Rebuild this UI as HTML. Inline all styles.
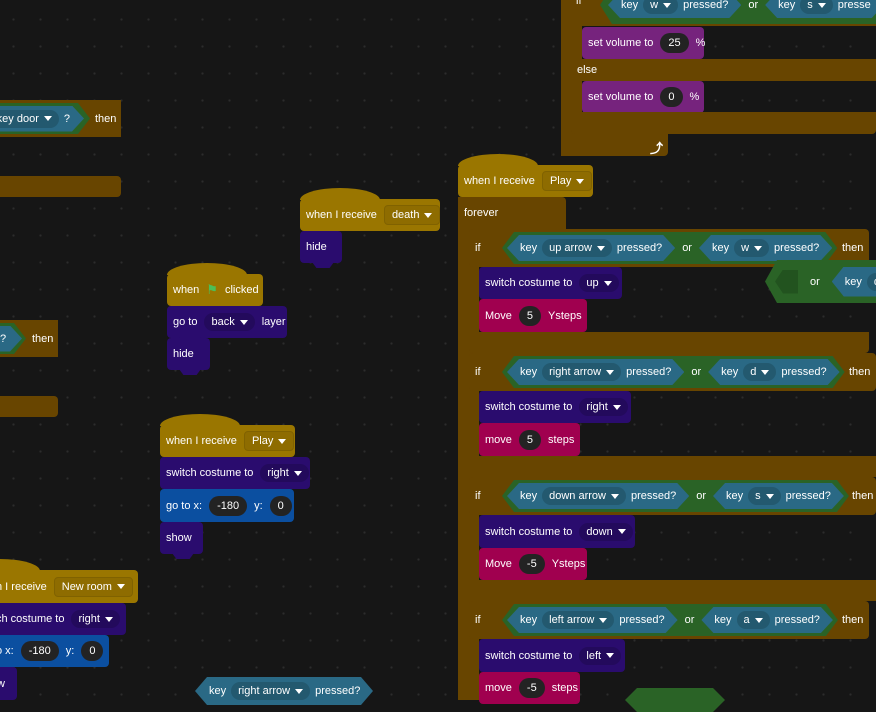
<!DOCTYPE html>
<html><head><meta charset="utf-8">
<style>
body{margin:0;width:876px;height:700px;overflow:hidden;background:#161616;
background-image:radial-gradient(circle,#2c2c2c 1px,transparent 1.3px);background-size:27px 27px;background-position:0px 6px;
font-family:"Liberation Sans",sans-serif;font-size:11px;color:#fff;position:relative}
.b{position:absolute;box-sizing:border-box;display:flex;align-items:center;gap:7px;padding:0 6px;border-radius:4px;white-space:nowrap}
.r{position:absolute;box-sizing:border-box}
.c{background:#684500}
.e{background:#9a7600}
.l{background:#2a0c6e}
.m{background:#0b4fa0}
.p{background:#a0004f}
.s{background:#76237d}
.n{background:#232323;border-radius:12px;padding:4px 8px}
.dd{border-radius:12px;padding:3px 7px;display:flex;align-items:center;gap:5px}
.e .dd{background:#8e6c00;border:1px solid #806200;border-radius:4px;padding:3px 7px}
.l .dd{background:#230a5c}
.hx .dd{background:#23596f}
.ar{width:0;height:0;border-left:4px solid transparent;border-right:4px solid transparent;border-top:5px solid #fff}
.hat::before{content:"";position:absolute;left:0;top:-11px;width:80px;height:12px;border-radius:50% 50% 0 0/100% 100% 0 0;background:inherit}
.nt::after{content:"";position:absolute;left:12px;bottom:-5px;width:22px;height:6px;background:inherit;clip-path:polygon(0 0,100% 0,80% 100%,20% 100%)}
.g{position:absolute;background:#2a6326;height:32px;clip-path:polygon(12px 0,calc(100% - 12px) 0,100% 50%,calc(100% - 12px) 100%,12px 100%,0 50%);display:flex;align-items:center;gap:7px;padding:0 5px;box-sizing:border-box;white-space:nowrap}
.hx{background:#2a6985;height:26px;clip-path:polygon(12px 0,calc(100% - 12px) 0,100% 50%,calc(100% - 12px) 100%,12px 100%,0 50%);display:flex;align-items:center;gap:5px;padding:0 13px;box-sizing:border-box;white-space:nowrap}
</style></head><body>

<!-- top right if-else -->
<div class="r c" style="left:561px;top:0;width:10px;height:156px"></div>
<div class="r c" style="left:571px;top:0;width:305px;height:26px"></div>
<div class="b" style="left:571px;top:-12px;height:26px;padding-left:5px">if</div>
<div class="g" style="left:600px;top:-14px;width:300px;height:38px;padding-left:8px">
 <div class="hx"><span>key</span><span class="dd">w <span class="ar"></span></span><span>pressed?</span></div>
 <span>or</span>
 <div class="hx"><span>key</span><span class="dd">s <span class="ar"></span></span><span>presse</span></div>
</div>
<div class="r c" style="left:571px;top:26px;width:11px;height:108px"></div>
<div class="b s nt" style="left:582px;top:27px;width:122px;height:32px">set volume to <span class="n">25</span> %</div>
<div class="r c" style="left:571px;top:59px;width:305px;height:22px"></div>
<div class="b" style="left:571px;top:59px;height:22px">else</div>
<div class="b s nt" style="left:582px;top:81px;width:122px;height:32px">set volume to <span class="n">0</span> %</div>
<div class="r c" style="left:571px;top:112px;width:305px;height:22px;border-radius:0 0 4px 4px"></div>
<div class="r c" style="left:561px;top:134px;width:107px;height:22px;border-radius:0 0 4px 4px"></div>
<div class="r" style="left:650px;top:138px;font-size:13px;font-weight:bold">⤴</div>

<!-- left partials -->
<div class="r c" style="left:0;top:100px;width:121px;height:37px"></div>
<div class="g" style="left:-40px;top:103px;width:130px;height:31px;padding:0 0 0 40px"><div class="hx" style="width:84px;padding:0 14px 0 0;justify-content:flex-end;clip-path:polygon(0 0,calc(100% - 12px) 0,100% 50%,calc(100% - 12px) 100%,0 100%)"><span class="dd">key door <span class="ar"></span></span><span>?</span></div></div>
<div class="b" style="left:89px;top:100px;height:37px">then</div>
<div class="r c" style="left:0;top:176px;width:121px;height:21px;border-radius:0 4px 4px 0"></div>
<div class="r c" style="left:0;top:320px;width:58px;height:37px"></div>
<div class="g" style="left:-30px;top:323px;width:56px;height:31px;padding:0"><div class="hx" style="width:52px;padding-left:30px">?</div></div>
<div class="b" style="left:26px;top:320px;height:37px">then</div>
<div class="r c" style="left:0;top:396px;width:58px;height:21px;border-radius:0 4px 4px 0"></div>

<!-- death -->
<div class="b e hat" style="left:300px;top:199px;width:140px;height:32px">when I receive <span class="dd">death <span class="ar"></span></span></div>
<div class="b l nt" style="left:300px;top:231px;width:42px;height:32px">hide</div>

<!-- flag -->
<div class="b e hat" style="left:167px;top:274px;width:96px;height:32px">when <span style="color:#4cbf56;font-size:13px">⚑</span> clicked</div>
<div class="b l nt" style="left:167px;top:306px;width:120px;height:32px">go to <span class="dd">back <span class="ar"></span></span> layer</div>
<div class="b l nt" style="left:167px;top:338px;width:43px;height:32px">hide</div>

<!-- Play left -->
<div class="b e hat" style="left:160px;top:425px;width:135px;height:32px">when I receive <span class="dd">Play <span class="ar"></span></span></div>
<div class="b l nt" style="left:160px;top:457px;width:150px;height:32px">switch costume to <span class="dd">right <span class="ar"></span></span></div>
<div class="b m nt" style="left:160px;top:489px;width:134px;height:33px">go to x: <span class="n">-180</span> y: <span class="n">0</span></div>
<div class="b l nt" style="left:160px;top:522px;width:43px;height:32px">show</div>

<!-- New room -->
<div class="b e" style="left:0;top:570px;width:138px;height:33px;padding-left:0;border-radius:0 4px 4px 0"><span style="margin-left:-4px">n I receive</span> <span class="dd">New room <span class="ar"></span></span></div>
<div class="r e" style="left:0;top:559px;width:40px;height:12px;border-radius:0 100% 0 0/0 100% 0 0"></div>
<div class="b l" style="left:0;top:603px;width:126px;height:32px;padding-left:0;border-radius:0 4px 4px 0"><span style="margin-left:-4px">ch costume to</span> <span class="dd">right <span class="ar"></span></span></div>
<div class="b m" style="left:0;top:635px;width:109px;height:32px;padding-left:0;border-radius:0 4px 4px 0"><span style="margin-left:-4px">o x:</span> <span class="n">-180</span> y: <span class="n">0</span></div>
<div class="b l" style="left:0;top:667px;width:17px;height:33px;padding-left:0;border-radius:0 4px 4px 0"><span style="margin-left:-3px">w</span></div>

<div class="hx" style="position:absolute;left:195px;top:677px;width:178px;height:28px;padding-left:14px"><span>key</span><span class="dd">right arrow <span class="ar"></span></span><span>pressed?</span></div>

<!-- big script -->
<div class="b e hat" style="left:458px;top:165px;width:135px;height:32px">when I receive <span class="dd">Play <span class="ar"></span></span></div>
<div class="r c" style="left:458px;top:197px;width:11px;height:503px"></div>
<div class="b c" style="left:458px;top:197px;width:108px;height:32px;border-radius:0 4px 0 0">forever</div>

<!-- if 1 -->
<div class="r c" style="left:469px;top:229px;width:10px;height:124px"></div>
<div class="b c" style="left:469px;top:229px;width:400px;height:38px;gap:0">if</div>
<div class="g" style="left:502px;top:232px"><div class="hx"><span>key</span><span class="dd">up arrow <span class="ar"></span></span><span>pressed?</span></div><span>or</span><div class="hx"><span>key</span><span class="dd">w <span class="ar"></span></span><span>pressed?</span></div></div>
<div class="b" style="left:836px;top:229px;height:38px">then</div>
<div class="b l nt" style="left:479px;top:267px;width:143px;height:32px">switch costume to <span class="dd">up <span class="ar"></span></span></div>
<div class="b p nt" style="left:479px;top:299px;width:108px;height:33px">Move <span class="n">5</span> Ysteps</div>
<div class="r c" style="left:469px;top:332px;width:400px;height:21px;border-radius:0 0 4px 4px"></div>

<div class="g" style="left:765px;top:260px;width:140px;height:43px;padding-left:10px;gap:12px"><div style="width:32px;height:24px;background:#22531f;clip-path:polygon(8px 0,24px 0,100% 50%,24px 100%,8px 100%,0 50%)"></div><span>or</span><div class="hx" style="height:30px"><span>key</span><span class="dd">d</span></div></div>

<!-- if 2 -->
<div class="r c" style="left:469px;top:353px;width:10px;height:124px"></div>
<div class="b c" style="left:469px;top:353px;width:407px;height:38px">if</div>
<div class="g" style="left:502px;top:356px"><div class="hx"><span>key</span><span class="dd">right arrow <span class="ar"></span></span><span>pressed?</span></div><span>or</span><div class="hx"><span>key</span><span class="dd">d <span class="ar"></span></span><span>pressed?</span></div></div>
<div class="b" style="left:843px;top:353px;height:38px">then</div>
<div class="b l nt" style="left:479px;top:391px;width:152px;height:32px">switch costume to <span class="dd">right <span class="ar"></span></span></div>
<div class="b p nt" style="left:479px;top:423px;width:101px;height:33px">move <span class="n">5</span> steps</div>
<div class="r c" style="left:469px;top:456px;width:407px;height:21px"></div>

<!-- if 3 -->
<div class="r c" style="left:469px;top:477px;width:10px;height:124px"></div>
<div class="b c" style="left:469px;top:477px;width:407px;height:38px">if</div>
<div class="g" style="left:502px;top:480px"><div class="hx"><span>key</span><span class="dd">down arrow <span class="ar"></span></span><span>pressed?</span></div><span>or</span><div class="hx"><span>key</span><span class="dd">s <span class="ar"></span></span><span>pressed?</span></div></div>
<div class="b" style="left:846px;top:477px;height:38px">then</div>
<div class="b l nt" style="left:479px;top:515px;width:156px;height:33px">switch costume to <span class="dd">down <span class="ar"></span></span></div>
<div class="b p nt" style="left:479px;top:548px;width:108px;height:32px">Move <span class="n">-5</span> Ysteps</div>
<div class="r c" style="left:469px;top:580px;width:407px;height:21px"></div>

<!-- if 4 -->
<div class="r c" style="left:469px;top:601px;width:10px;height:99px"></div>
<div class="b c" style="left:469px;top:601px;width:400px;height:38px">if</div>
<div class="g" style="left:502px;top:604px"><div class="hx"><span>key</span><span class="dd">left arrow <span class="ar"></span></span><span>pressed?</span></div><span>or</span><div class="hx"><span>key</span><span class="dd">a <span class="ar"></span></span><span>pressed?</span></div></div>
<div class="b" style="left:836px;top:601px;height:38px">then</div>
<div class="b l nt" style="left:479px;top:639px;width:146px;height:33px">switch costume to <span class="dd">left <span class="ar"></span></span></div>
<div class="b p" style="left:479px;top:672px;width:101px;height:32px">move <span class="n">-5</span> steps</div>
<div class="g" style="left:625px;top:688px;width:100px;height:24px"></div>
</body></html>
